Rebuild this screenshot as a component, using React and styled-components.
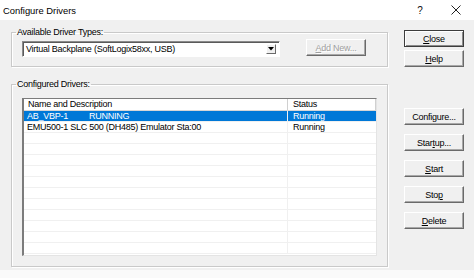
import styled, { createGlobalStyle } from "styled-components";

const GlobalStyle = createGlobalStyle`
  html, body {
    margin: 0;
    padding: 0;
    background: #ffffff;
  }
  body {
    font-family: "Liberation Sans", Arial, sans-serif;
    font-size: 9px;
    letter-spacing: -0.25px;
    color: #000;
  }
`;

const Window = styled.div`
  width: 474px;
  height: 278px;
  overflow: hidden;
  display: flex;
  flex-direction: column;
  background: #fafafa;
`;

const TitleBar = styled.div`
  height: 20px;
  flex: none;
  display: flex;
  align-items: center;
  background: #ffffff;
  padding-left: 3px;
`;

const Title = styled.div`
  flex: 1;
  font-size: 9.4px;
  letter-spacing: 0;
  color: #000;
`;

const TitleControl = styled.div`
  width: 36px;
  height: 20px;
  display: flex;
  align-items: center;
  justify-content: center;
  font-size: 10px;
  letter-spacing: 0;
  color: #111;
`;

const Body = styled.div`
  height: 250px;
  flex: none;
  background: #f0f0f0;
  display: flex;
  gap: 16px;
  padding: 6px 11px 0 11px;
  box-sizing: border-box;
`;

const LeftColumn = styled.div`
  width: 377px;
  display: flex;
  flex-direction: column;
`;

const Group = styled.fieldset`
  margin: ${(p) => p.$top || 0}px 0 0 0;
  padding: ${(p) => p.$pt}px ${(p) => p.$pr}px ${(p) => p.$pb}px 10px;
  border: 1px solid #c9c9c9;
  box-shadow: inset 1px 1px 0 #ffffff, 1px 1px 0 #ffffff;
  min-width: 0;
`;

const Legend = styled.legend`
  margin-left: -6px;
  padding: 0 1px;
  line-height: 12px;
`;

const DriverRow = styled.div`
  display: flex;
  align-items: flex-start;
  height: 18px;
`;

const Combo = styled.div`
  margin-top: 2px;
  width: 259px;
  height: 16px;
  box-sizing: border-box;
  background: #fff;
  border: 1px solid;
  border-color: #8a8a8a #ffffff #ffffff #8a8a8a;
  box-shadow: inset 1px 1px 0 #5a5a5a;
  display: flex;
  align-items: center;
  padding-left: 3px;
`;

const ComboText = styled.div`
  flex: 1;
  white-space: nowrap;
`;

const DropButton = styled.div`
  width: 10px;
  height: 10px;
  margin-right: 3px;
  box-sizing: border-box;
  background: #f0f0f0;
  border: 1px solid;
  border-color: #ffffff #6a6a6a #6a6a6a #ffffff;
  display: flex;
  align-items: center;
  justify-content: center;
`;

const Button = styled.div`
  width: 60px;
  height: 17px;
  box-sizing: border-box;
  flex: none;
  background: #f0f0f0;
  border: 1px solid;
  border-color: ${(p) => (p.$default ? "#3c3c3c" : "#ffffff #6a6a6a #6a6a6a #ffffff")};
  box-shadow: ${(p) =>
    p.$default
      ? "inset 1px 1px 0 #ffffff, inset -1px -1px 0 #8a8a8a"
      : "inset -1px -1px 0 #a8a8a8"};
  display: flex;
  align-items: center;
  justify-content: center;
  color: ${(p) => (p.$disabled ? "#a0a0a0" : "#000")};
  text-shadow: ${(p) => (p.$disabled ? "1px 1px 0 #ffffff" : "none")};
  margin-top: ${(p) => p.$mt || 0}px;
  margin-left: ${(p) => p.$ml || 0}px;
  white-space: nowrap;
`;

const Key = styled.span`
  text-decoration: underline;
`;

const ListView = styled.div`
  width: 355px;
  height: 158px;
  box-sizing: border-box;
  background: #ffffff;
  border-left: 2px solid #7c7c7c;
  border-top: 1px solid #7c7c7c;
  border-right: 1px solid #e4e4e4;
  border-bottom: 1px solid #e4e4e4;
  overflow: hidden;
`;

const HeaderRow = styled.div`
  display: grid;
  grid-template-columns: 264px 1fr;
  height: 12px;
  border-bottom: 1px solid #d6d6d6;
  box-sizing: border-box;
`;

const HeaderCell = styled.div`
  line-height: 11px;
  padding-left: ${(p) => p.$pl}px;
  border-right: 1px solid #d0d0d0;
  background: #ffffff;
  white-space: nowrap;
`;

const Row = styled.div`
  display: grid;
  grid-template-columns: 264px 1fr;
  height: 11px;
  box-sizing: border-box;
  border-bottom: 1px solid #f0f0f0;
  background: ${(p) => (p.$selected ? "#0078d7" : "transparent")};
  color: ${(p) => (p.$selected ? "#ffffff" : "#000")};
`;

const Cell = styled.div`
  line-height: 10px;
  padding-left: ${(p) => p.$pl}px;
  white-space: nowrap;
  overflow: hidden;
  border-right: ${(p) => (p.$divider ? "1px solid #f0f0f0" : "none")};
`;

const DriverName = styled.span`
  display: inline-block;
  width: 62px;
`;

const RightColumn = styled.div`
  width: 60px;
  display: flex;
  flex-direction: column;
  padding-top: 4px;
`;

const drivers = [
  { name: "AB_VBP-1", state: "RUNNING", status: "Running", selected: true },
  { name: "EMU500-1 SLC 500 (DH485) Emulator Sta:00", status: "Running" },
];

export default function App() {
  const blanks = Array.from({ length: 11 });

  return (
    <>
      <GlobalStyle />
      <Window>
        <TitleBar>
          <Title>Configure Drivers</Title>
          <TitleControl>?</TitleControl>
          <TitleControl>
            <svg width="10" height="10" viewBox="0 0 10 10">
              <path d="M0.5 0.5 L9.5 9.5 M9.5 0.5 L0.5 9.5" stroke="#222" strokeWidth="1" />
            </svg>
          </TitleControl>
        </TitleBar>
        <Body>
          <LeftColumn>
            <Group $pt={1} $pr={21} $pb={9}>
              <Legend>Available Driver Types:</Legend>
              <DriverRow>
                <Combo>
                  <ComboText>Virtual Backplane (SoftLogix58xx, USB)</ComboText>
                  <DropButton>
                    <svg width="6" height="4" viewBox="0 0 6 4">
                      <path d="M0 0 L6 0 L3 3.5 Z" fill="#000" />
                    </svg>
                  </DropButton>
                </Combo>
                <Button $disabled $ml={26}>
                  <Key>A</Key>dd New...
                </Button>
              </DriverRow>
            </Group>
            <Group $top={11} $pt={8} $pr={11} $pb={10}>
              <Legend>Configured Drivers:</Legend>
              <ListView>
                <HeaderRow>
                  <HeaderCell $pl={4}>Name and Description</HeaderCell>
                  <HeaderCell $pl={5}>Status</HeaderCell>
                </HeaderRow>
                {drivers.map((d) => (
                  <Row key={d.name} $selected={d.selected}>
                    <Cell $pl={3} $divider>
                      {d.state ? (
                        <>
                          <DriverName>{d.name}</DriverName>
                          {d.state}
                        </>
                      ) : (
                        d.name
                      )}
                    </Cell>
                    <Cell $pl={5}>{d.status}</Cell>
                  </Row>
                ))}
                {blanks.map((_, i) => (
                  <Row key={i}>
                    <Cell $pl={3} $divider />
                    <Cell $pl={5} />
                  </Row>
                ))}
              </ListView>
            </Group>
          </LeftColumn>
          <RightColumn>
            <Button $default>
              <Key>C</Key>lose
            </Button>
            <Button $mt={3}>
              <Key>H</Key>elp
            </Button>
            <Button $mt={41}>
              Confi<Key>g</Key>ure...
            </Button>
            <Button $mt={9}>
              Star<Key>t</Key>up...
            </Button>
            <Button $mt={9}>
              <Key>S</Key>tart
            </Button>
            <Button $mt={9}>
              Sto<Key>p</Key>
            </Button>
            <Button $mt={9}>
              <Key>D</Key>elete
            </Button>
          </RightColumn>
        </Body>
      </Window>
    </>
  );
}
